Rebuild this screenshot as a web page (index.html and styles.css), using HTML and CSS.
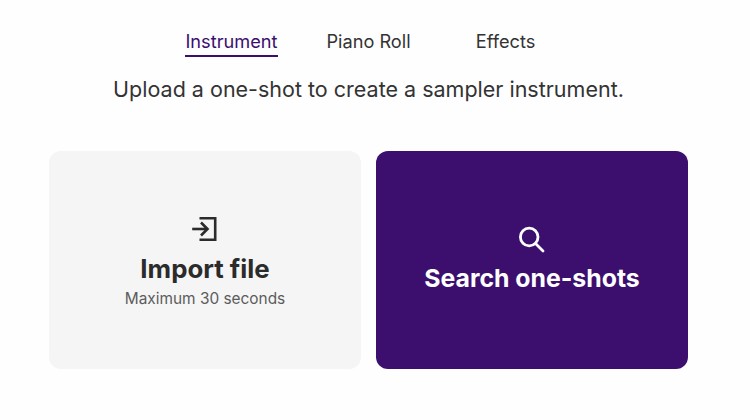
FILE: index.html
```html
<!DOCTYPE html>
<html>
<head>
    <title>Sampler Instrument</title>
    <meta name="viewport" content="width=device-width, initial-scale=1.0">
    <link rel="stylesheet" href="styles.css">
</head>
<body>
    <div class="panel">
        <div class="tabs">
            <div class="tab"><span class="tab-label active">Instrument</span></div>
            <div class="tab"><span class="tab-label">Piano Roll</span></div>
            <div class="tab"><span class="tab-label">Effects</span></div>
        </div>

        <p class="intro">Upload a one-shot to create a sampler instrument.</p>

        <div class="cards">
            <div class="card card-import">
                <svg class="card-icon" viewBox="0 0 28 28" width="28" height="28" fill="none" stroke="currentColor" stroke-width="2.6">
                    <path d="M8.5 3.2H24.2V24.8H8.5"/>
                    <path d="M1.2 14H16"/>
                    <path d="M10 7.5L16.5 14L10 20.5"/>
                </svg>
                <div class="card-title">Import file</div>
                <div class="card-note">Maximum 30 seconds</div>
            </div>
            <div class="card card-search">
                <svg class="card-icon" viewBox="0 0 28 28" width="28" height="28" fill="none" stroke="currentColor" stroke-width="2.8" stroke-linecap="round">
                    <circle cx="11.2" cy="11" r="8.8"/>
                    <path d="M18 18L25 25"/>
                </svg>
                <div class="card-title">Search one-shots</div>
            </div>
        </div>
    </div>
</body>
</html>
```

FILE: styles.css
```css
html, body {
    height: 100%;
}
body {
    margin: 0;
    background-color: #fefefe;
    color: #333;
    font-family: Inter, "Open Sans", sans-serif;
    overflow: hidden;
}
.panel {
    width: 639px;
    margin-left: 49px;
    padding-top: 29px;
}
.tabs {
    display: flex;
    justify-content: center;
}
.tab {
    display: flex;
    justify-content: center;
    width: 137px;
}
.tab-label {
    padding-bottom: 2px;
    border-bottom: 2px solid transparent;
    font-size: 18.2px;
    line-height: 24px;
}
.tab-label.active {
    color: #3c0f6e;
    border-bottom-color: #3c0f6e;
}
.intro {
    margin: 17px 0 0;
    text-align: center;
    font-size: 21.5px;
    line-height: 30px;
}
.cards {
    display: flex;
    gap: 15px;
    margin-top: 47px;
}
.card {
    box-sizing: border-box;
    flex: 1;
    height: 218px;
    border-radius: 12px;
    display: flex;
    flex-direction: column;
    align-items: center;
    justify-content: center;
}
.card-import {
    padding-top: 4px;
    background-color: #f5f5f5;
    color: #2b2b2b;
}
.card-search {
    padding-bottom: 1px;
    background-color: #3c0f6e;
    color: #fff;
}
.card-icon {
    margin-bottom: 10px;
}
.card-search .card-icon {
    margin-bottom: 8px;
}
.card-title {
    font-size: 25.8px;
    line-height: 32px;
    font-weight: 700;
}
.card-search .card-title {
    font-size: 24.8px;
}
.card-note {
    margin-top: 4px;
    font-size: 15.4px;
    line-height: 20px;
    color: #5c5c5c;
}
```
